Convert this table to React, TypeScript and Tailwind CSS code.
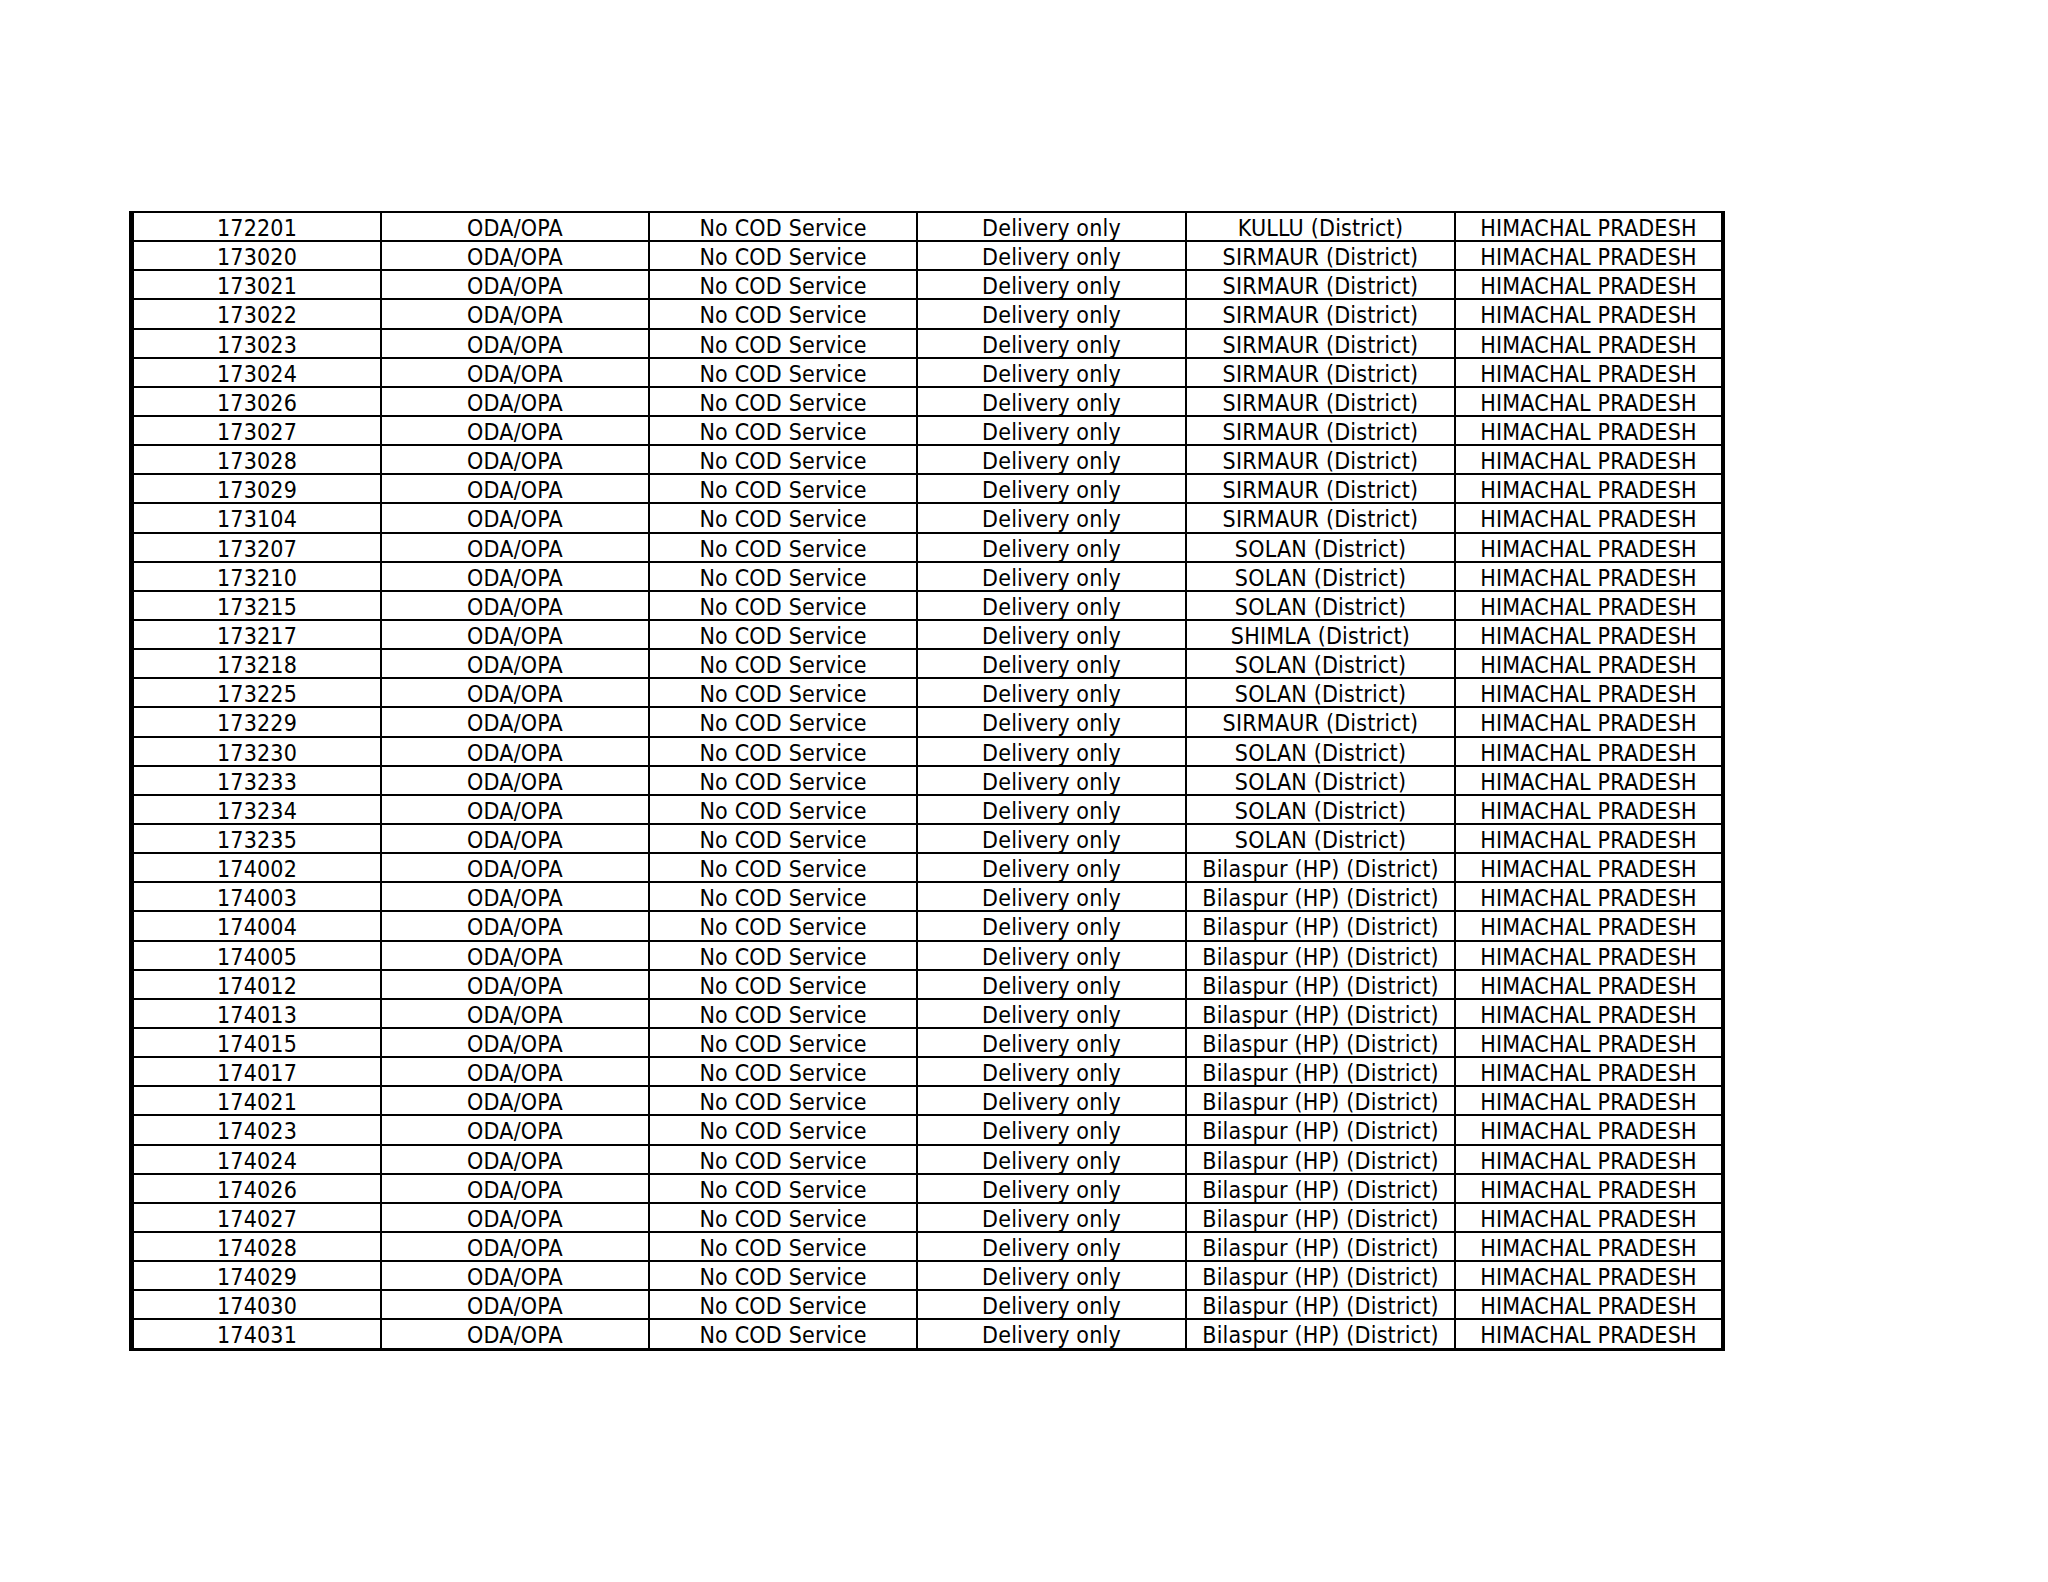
import React from "react";

type Row = [string, string];

const rows: Row[] = [
  ["172201", "KULLU (District)"],
  ["173020", "SIRMAUR (District)"],
  ["173021", "SIRMAUR (District)"],
  ["173022", "SIRMAUR (District)"],
  ["173023", "SIRMAUR (District)"],
  ["173024", "SIRMAUR (District)"],
  ["173026", "SIRMAUR (District)"],
  ["173027", "SIRMAUR (District)"],
  ["173028", "SIRMAUR (District)"],
  ["173029", "SIRMAUR (District)"],
  ["173104", "SIRMAUR (District)"],
  ["173207", "SOLAN (District)"],
  ["173210", "SOLAN (District)"],
  ["173215", "SOLAN (District)"],
  ["173217", "SHIMLA (District)"],
  ["173218", "SOLAN (District)"],
  ["173225", "SOLAN (District)"],
  ["173229", "SIRMAUR (District)"],
  ["173230", "SOLAN (District)"],
  ["173233", "SOLAN (District)"],
  ["173234", "SOLAN (District)"],
  ["173235", "SOLAN (District)"],
  ["174002", "Bilaspur (HP) (District)"],
  ["174003", "Bilaspur (HP) (District)"],
  ["174004", "Bilaspur (HP) (District)"],
  ["174005", "Bilaspur (HP) (District)"],
  ["174012", "Bilaspur (HP) (District)"],
  ["174013", "Bilaspur (HP) (District)"],
  ["174015", "Bilaspur (HP) (District)"],
  ["174017", "Bilaspur (HP) (District)"],
  ["174021", "Bilaspur (HP) (District)"],
  ["174023", "Bilaspur (HP) (District)"],
  ["174024", "Bilaspur (HP) (District)"],
  ["174026", "Bilaspur (HP) (District)"],
  ["174027", "Bilaspur (HP) (District)"],
  ["174028", "Bilaspur (HP) (District)"],
  ["174029", "Bilaspur (HP) (District)"],
  ["174030", "Bilaspur (HP) (District)"],
  ["174031", "Bilaspur (HP) (District)"],
];

export default function App() {
  return (
    <div
      className="w-[2048px] h-[1582px] bg-white pt-[211px] pl-[129px] text-black"
      style={{ fontFamily: '"DejaVu Sans Condensed", "DejaVu Sans", sans-serif' }}
    >
      <div className="w-[1596px] border-l-[5px] border-r-[4px] border-t-2 border-b-[3px] border-black text-[23px] tracking-[0.2px] leading-none">
        {rows.map(([pin, district], i) => (
          <div
            key={pin}
            className={
              i === rows.length - 1
                ? "flex h-[27.2px] items-center"
                : "flex h-[29.15px] items-center border-b-2 border-black"
            }
          >
            <div className="w-[248px] h-full pt-[4px] flex items-center justify-center border-r-2 border-black">{pin}</div>
            <div className="w-[268px] h-full pt-[4px] flex items-center justify-center border-r-2 border-black">ODA/OPA</div>
            <div className="w-[268px] h-full pt-[4px] flex items-center justify-center border-r-2 border-black">No COD Service</div>
            <div className="w-[269px] h-full pt-[4px] flex items-center justify-center border-r-2 border-black">Delivery only</div>
            <div className="w-[269px] h-full pt-[4px] flex items-center justify-center border-r-2 border-black">{district}</div>
            <div className="flex-1 h-full pt-[4px] flex items-center justify-center">HIMACHAL PRADESH</div>
          </div>
        ))}
      </div>
    </div>
  );
}
